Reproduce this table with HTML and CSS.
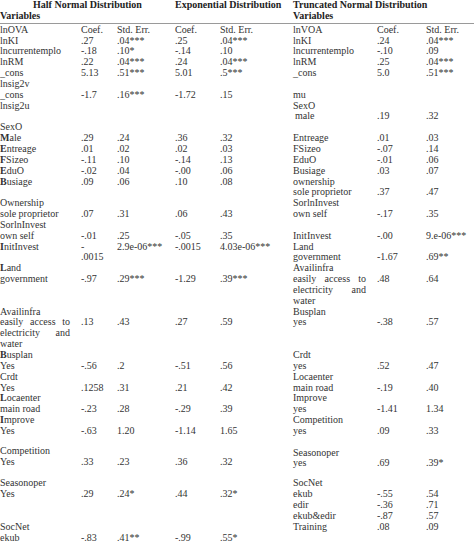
FILE: index.html
```html
<!DOCTYPE html>
<html lang="en">
<head>
<meta charset="utf-8">
<title>Stochastic frontier estimates</title>
<link rel="stylesheet" href="styles.css">
</head>
<body>
<div class="sheet">
  <table class="tbl left">
    <colgroup>
      <col class="c-var"><col class="c-coef"><col class="c-se"><col class="c-coef2"><col class="c-se2">
    </colgroup>
    <thead>
      <tr><th colspan="3" class="h-center">Half Normal Distribution</th><th colspan="2" class="h-left">Exponential Distribution</th></tr>
      <tr class="h-last"><th class="h-left">Variables</th><th></th><th></th><th></th><th></th></tr>
    </thead>
    <tbody>
      <tr><td>lnOVA</td><td>Coef.</td><td>Std. Err.</td><td>Coef.</td><td>Std. Err.</td></tr>
      <tr><td>lnKI</td><td>.27</td><td>.04***</td><td>.25</td><td>.04***</td></tr>
      <tr><td>lncurrentemplo</td><td>-.18</td><td>.10*</td><td>-.14</td><td>.10</td></tr>
      <tr><td>lnRM</td><td>.22</td><td>.04***</td><td>.24</td><td>.04***</td></tr>
      <tr><td>_cons</td><td>5.13</td><td>.51***</td><td>5.01</td><td>.5***</td></tr>
      <tr><td>lnsig2v</td><td></td><td></td><td></td><td></td></tr>
      <tr><td>_cons</td><td>-1.7</td><td>.16***</td><td>-1.72</td><td>.15</td></tr>
      <tr><td>lnsig2u</td><td></td><td></td><td></td><td></td></tr>
      <tr class="blank"><td>&nbsp;</td><td></td><td></td><td></td><td></td></tr>
      <tr><td>SexO</td><td></td><td></td><td></td><td></td></tr>
      <tr><td><b>M</b>ale</td><td>.29</td><td>.24</td><td>.36</td><td>.32</td></tr>
      <tr><td><b>E</b>ntreage</td><td>.01</td><td>.02</td><td>.02</td><td>.03</td></tr>
      <tr><td><b>F</b>Sizeo</td><td>-.11</td><td>.10</td><td>-.14</td><td>.13</td></tr>
      <tr><td><b>E</b>duO</td><td>-.02</td><td>.04</td><td>-.00</td><td>.06</td></tr>
      <tr><td><b>B</b>usiage</td><td>.09</td><td>.06</td><td>.10</td><td>.08</td></tr>
      <tr class="blank"><td>&nbsp;</td><td></td><td></td><td></td><td></td></tr>
      <tr><td>Ownership</td><td></td><td></td><td></td><td></td></tr>
      <tr><td>sole proprietor</td><td>.07</td><td>.31</td><td>.06</td><td>.43</td></tr>
      <tr><td>SorlnInvest</td><td></td><td></td><td></td><td></td></tr>
      <tr><td>own self</td><td>-.01</td><td>.25</td><td>-.05</td><td>.35</td></tr>
      <tr><td><b>I</b>nitInvest</td><td>-<br>.0015</td><td>2.9e-06***</td><td>-.0015</td><td>4.03e-06***</td></tr>
      <tr><td><b>L</b>and</td><td></td><td></td><td></td><td></td></tr>
      <tr><td>government</td><td>-.97</td><td>.29***</td><td>-1.29</td><td>.39***</td></tr>
      <tr class="blank"><td>&nbsp;</td><td></td><td></td><td></td><td></td></tr>
      <tr class="blank"><td>&nbsp;</td><td></td><td></td><td></td><td></td></tr>
      <tr><td>Availinfra</td><td></td><td></td><td></td><td></td></tr>
      <tr><td class="just">easily access to<br>electricity and<br>water</td><td>.13</td><td>.43</td><td>.27</td><td>.59</td></tr>
      <tr><td><b>B</b>usplan</td><td></td><td></td><td></td><td></td></tr>
      <tr><td>Yes</td><td>-.56</td><td>.2</td><td>-.51</td><td>.56</td></tr>
      <tr><td>Crdt</td><td></td><td></td><td></td><td></td></tr>
      <tr><td>Yes</td><td>.1258</td><td>.31</td><td>.21</td><td>.42</td></tr>
      <tr><td><b>L</b>ocaenter</td><td></td><td></td><td></td><td></td></tr>
      <tr><td>main road</td><td>-.23</td><td>.28</td><td>-.29</td><td>.39</td></tr>
      <tr><td><b>I</b>mprove</td><td></td><td></td><td></td><td></td></tr>
      <tr><td>Yes</td><td>-.63</td><td>1.20</td><td>-1.14</td><td>1.65</td></tr>
      <tr class="blank short"><td>&nbsp;</td><td></td><td></td><td></td><td></td></tr>
      <tr><td>Competition</td><td></td><td></td><td></td><td></td></tr>
      <tr><td>Yes</td><td>.33</td><td>.23</td><td>.36</td><td>.32</td></tr>
      <tr class="blank"><td>&nbsp;</td><td></td><td></td><td></td><td></td></tr>
      <tr><td>Seasonoper</td><td></td><td></td><td></td><td></td></tr>
      <tr><td>Yes</td><td>.29</td><td>.24*</td><td>.44</td><td>.32*</td></tr>
      <tr class="blank"><td>&nbsp;</td><td></td><td></td><td></td><td></td></tr>
      <tr class="blank"><td>&nbsp;</td><td></td><td></td><td></td><td></td></tr>
      <tr><td>SocNet</td><td></td><td></td><td></td><td></td></tr>
      <tr><td>ekub</td><td>-.83</td><td>.41**</td><td>-.99</td><td>.55*</td></tr>
    </tbody>
  </table>
  <table class="tbl right">
    <colgroup>
      <col class="r-var"><col class="r-coef"><col class="r-se">
    </colgroup>
    <thead>
      <tr><th colspan="3" class="h-left">Truncated Normal Distribution</th></tr>
      <tr class="h-last"><th class="h-left">Variables</th><th></th><th></th></tr>
    </thead>
    <tbody>
      <tr><td>lnVOA</td><td>Coef.</td><td>Std. Err.</td></tr>
      <tr><td>lnKI</td><td>.24</td><td>.04***</td></tr>
      <tr><td>lncurrentemplo</td><td>-.10</td><td>.09</td></tr>
      <tr><td>lnRM</td><td>.25</td><td>.04***</td></tr>
      <tr><td>_cons</td><td>5.0</td><td>.51***</td></tr>
      <tr class="blank"><td>&nbsp;</td><td></td><td></td></tr>
      <tr><td>mu</td><td></td><td></td></tr>
      <tr><td>SexO</td><td></td><td></td></tr>
      <tr><td class="indent">male</td><td>.19</td><td>.32</td></tr>
      <tr class="blank"><td>&nbsp;</td><td></td><td></td></tr>
      <tr><td>Entreage</td><td>.01</td><td>.03</td></tr>
      <tr><td>FSizeo</td><td>-.07</td><td>.14</td></tr>
      <tr><td>EduO</td><td>-.01</td><td>.06</td></tr>
      <tr><td>Busiage</td><td>.03</td><td>.07</td></tr>
      <tr><td>ownership</td><td></td><td></td></tr>
      <tr><td>sole proprietor</td><td>.37</td><td>.47</td></tr>
      <tr><td>SorlnInvest</td><td></td><td></td></tr>
      <tr><td>own self</td><td>-.17</td><td>.35</td></tr>
      <tr class="blank"><td>&nbsp;</td><td></td><td></td></tr>
      <tr><td>InitInvest</td><td>-.00</td><td>9.e-06***</td></tr>
      <tr><td>Land</td><td></td><td></td></tr>
      <tr><td>government</td><td>-1.67</td><td>.69**</td></tr>
      <tr><td>Availinfra</td><td></td><td></td></tr>
      <tr><td class="just">easily access to<br>electricity and<br>water</td><td>.48</td><td>.64</td></tr>
      <tr><td>Busplan</td><td></td><td></td></tr>
      <tr><td>yes</td><td>-.38</td><td>.57</td></tr>
      <tr class="blank"><td>&nbsp;</td><td></td><td></td></tr>
      <tr class="blank"><td>&nbsp;</td><td></td><td></td></tr>
      <tr><td>Crdt</td><td></td><td></td></tr>
      <tr><td>yes</td><td>.52</td><td>.47</td></tr>
      <tr><td>Locaenter</td><td></td><td></td></tr>
      <tr><td>main road</td><td>-.19</td><td>.40</td></tr>
      <tr><td>Improve</td><td></td><td></td></tr>
      <tr><td>yes</td><td>-1.41</td><td>1.34</td></tr>
      <tr><td>Competition</td><td></td><td></td></tr>
      <tr><td>yes</td><td>.09</td><td>.33</td></tr>
      <tr class="blank"><td>&nbsp;</td><td></td><td></td></tr>
      <tr><td>Seasonoper</td><td></td><td></td></tr>
      <tr><td>yes</td><td>.69</td><td>.39*</td></tr>
      <tr class="blank short"><td>&nbsp;</td><td></td><td></td></tr>
      <tr><td>SocNet</td><td></td><td></td></tr>
      <tr><td>ekub</td><td>-.55</td><td>.54</td></tr>
      <tr><td>edir</td><td>-.36</td><td>.71</td></tr>
      <tr><td>ekub&amp;edir</td><td>-.87</td><td>.57</td></tr>
      <tr><td>Training</td><td>.08</td><td>.09</td></tr>
    </tbody>
  </table>
</div>
</body>
</html>
```
FILE: styles.css
```css
html, body {
  margin: 0;
  padding: 0;
  background: #ffffff;
}

body {
  font-family: "Liberation Serif", "Times New Roman", serif;
  font-size: 10px;
  line-height: 10.85px;
  color: #333333;
}

.sheet {
  display: flex;
  align-items: flex-start;
  width: 474px;
  overflow: hidden;
}

.tbl {
  border-collapse: collapse;
  border-spacing: 0;
  table-layout: fixed;
}

.tbl.left { width: 293px; }
.tbl.right { width: 181px; }

.c-var { width: 81px; }
.c-coef { width: 36px; }
.c-se { width: 58px; }
.c-coef2 { width: 45px; }
.c-se2 { width: 73px; }

.r-var { width: 84px; }
.r-coef { width: 49px; }
.r-se { width: 48px; }

.tbl th,
.tbl td {
  padding: 0;
  vertical-align: top;
  white-space: nowrap;
  text-align: left;
  font-weight: normal;
  height: 10.85px;
}

.tbl th {
  font-weight: bold;
  color: #222222;
}

.tbl th.h-center {
  text-align: center;
  padding-right: 0;
}

.tbl thead tr.h-last th {
  border-bottom: 1px solid #9a9a9a;
  padding-bottom: 1px;
}

.tbl tbody tr:first-child td {
  padding-top: 1px;
}

.tbl td:first-child {
  padding-right: 11px;
}

.tbl td b {
  font-weight: bold;
}

.tbl td.just {
  white-space: normal;
  text-align: justify;
  text-align-last: justify;
}

.tbl td.indent {
  padding-left: 2px;
}

.tbl tr.blank.short td {
  height: 9px;
  line-height: 9px;
}
```
